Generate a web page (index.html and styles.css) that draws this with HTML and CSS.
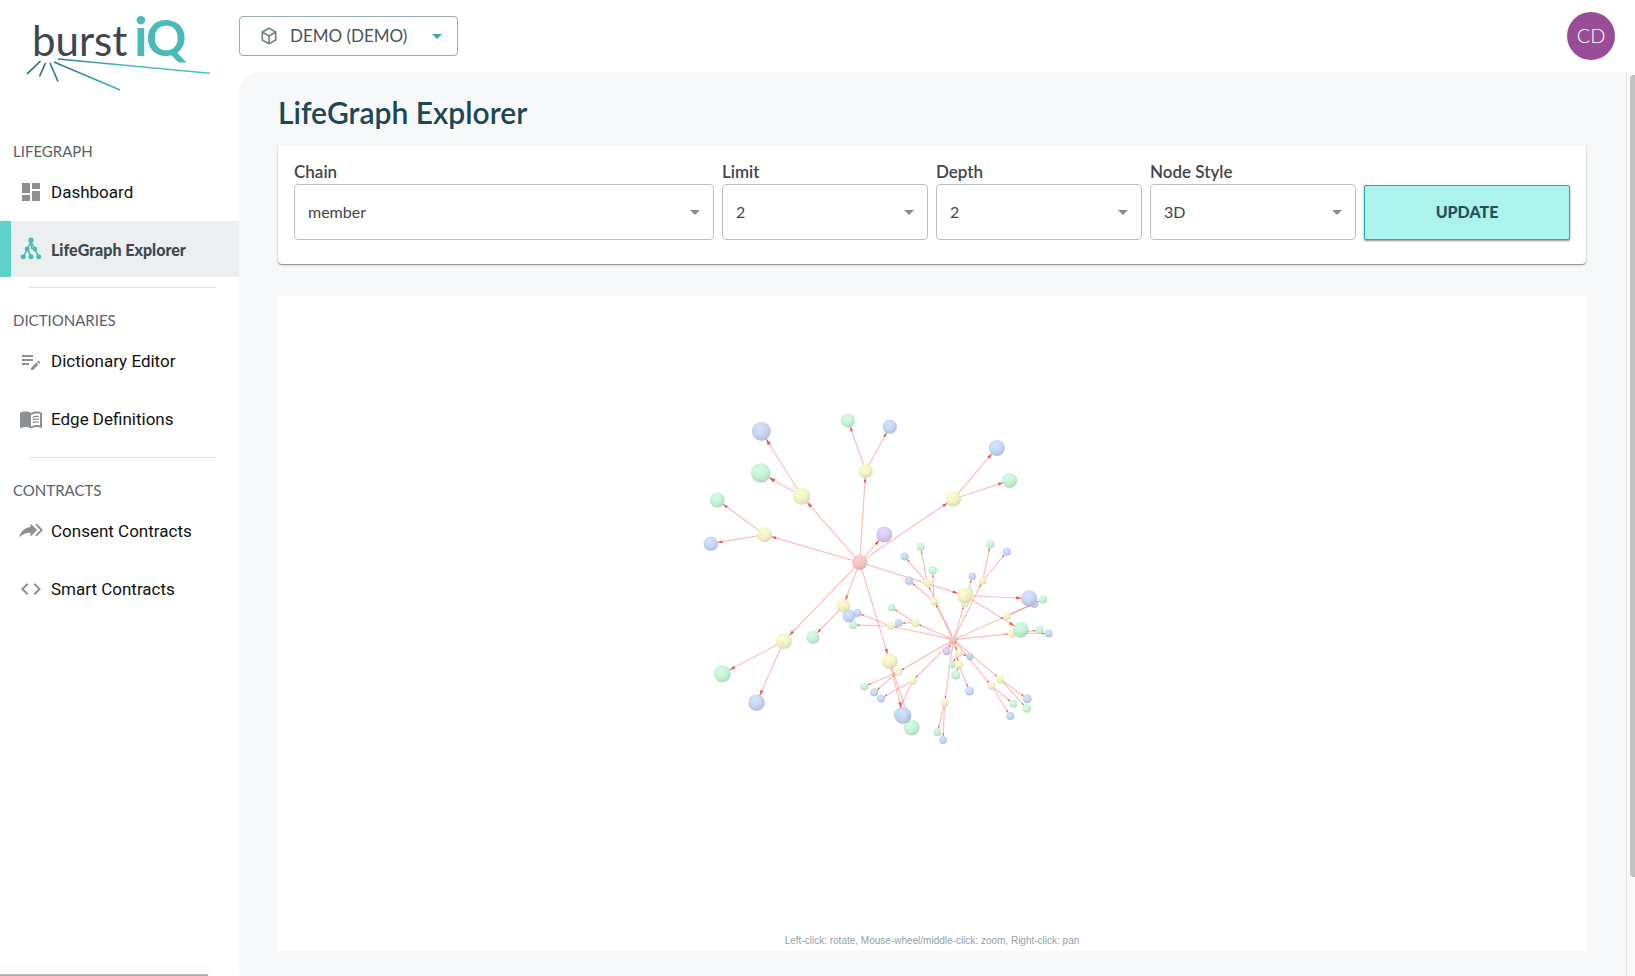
FILE: index.html
```html
<!DOCTYPE html>
<html lang="en">
<head>
<meta charset="utf-8">
<meta name="viewport" content="width=device-width, initial-scale=1">
<title>LifeGraph Explorer</title>
<link rel="stylesheet" href="styles.css">
</head>
<body>
<div class="shell">
  <aside class="sidebar">
    <a class="logo" href="#" aria-label="burst iQ">
      <svg class="logo-art" viewBox="0 0 239 119" role="img" aria-label="burst iQ">
        <defs>
          <linearGradient id="ray" gradientUnits="userSpaceOnUse" x1="27" y1="0" x2="130" y2="0">
            <stop offset="0" stop-color="#1f5f70"/>
            <stop offset="1" stop-color="#4bbfc3"/>
          </linearGradient>
        </defs>
        <text class="logo-burst" x="32" y="56">burst</text>
        <text class="logo-iq" x="134" y="56">i</text>
        <text class="logo-q" x="146" y="56">Q</text>
        <g stroke="url(#ray)" stroke-width="1.6" fill="none">
          <path d="M58 59 210 73.200"/>
          <path d="M54 62 120 90"/>
          <path d="M50 63 58 81.500"/>
          <path d="M45.500 63 39.500 76.500"/>
          <path d="M40.500 61 27 74"/>
        </g>
      </svg>
    </a>
    <nav class="nav" aria-label="Main">
      <section class="nav-group">
        <h2 class="nav-heading">LIFEGRAPH</h2>
        <a class="nav-item" href="#"><svg class="icon" viewBox="0 0 24 24"><path d="M3 13h8V3H3v10zm0 8h8v-6H3v6zm10 0h8V11h-8v10zm0-18v6h8V3h-8z"/></svg>Dashboard</a>
        <a class="nav-item nav-item-active" href="#" aria-current="page"><svg class="icon" viewBox="0 0 24 24"><g fill="none" stroke="currentColor" stroke-width="1.500"><path d="M12 4.500 8.200 12 4.300 20M12 4.500l3.700 7.500 4 8M8.500 12l3.500 8M11.500 4.500 12.500 11l3 1"/></g><circle cx="12" cy="3.200" r="2.600"/><circle cx="8.200" cy="12" r="2.400"/><circle cx="15.800" cy="12" r="2.400"/><circle cx="4.300" cy="19.800" r="2.500"/><circle cx="12" cy="19.800" r="2.500"/><circle cx="19.700" cy="19.800" r="2.500"/></svg>LifeGraph Explorer</a>
      </section>
      <section class="nav-group">
        <h2 class="nav-heading">DICTIONARIES</h2>
        <a class="nav-item" href="#"><svg class="icon" viewBox="0 0 24 24"><path d="M3 10h11v2H3v-2zm0-2h11V6H3v2zm0 8h7v-2H3v2zm15.010-3.130.710-.710c.390-.390 1.020-.390 1.410 0l.710.710c.390.390.390 1.020 0 1.410l-.710.710-2.120-2.120zm-.710.710-5.300 5.300V21h2.120l5.300-5.300-2.120-2.120z"/></svg>Dictionary Editor</a>
        <a class="nav-item" href="#"><svg class="icon" viewBox="0 0 24 24"><path d="M17.500 4.500c-1.950 0-4.050.4-5.500 1.500-1.450-1.100-3.550-1.500-5.500-1.500S2.450 4.900 1 6v14.650c0 .65.73.45.75.45C3.100 20.450 5.050 20 6.500 20c1.950 0 4.050.4 5.500 1.500 1.350-.85 3.800-1.500 5.500-1.500 1.650 0 3.350.3 4.750 1.050.41.21.75-.19.75-.45V6c-1.490-1.120-3.630-1.500-5.500-1.500zm3.500 14c-1.100-.35-2.300-.5-3.500-.5-1.700 0-4.150.65-5.500 1.500V8c1.350-.85 3.800-1.500 5.500-1.500 1.200 0 2.400.15 3.500.5v11.500z"/><path d="M13.700 10.300c2-.9 4-1 6-.6M13.700 13c2-.9 4-1 6-.6M13.700 15.700c2-.9 4-1 6-.6" fill="none" stroke="currentColor" stroke-width="1.300"/></svg>Edge Definitions</a>
      </section>
      <section class="nav-group">
        <h2 class="nav-heading">CONTRACTS</h2>
        <a class="nav-item" href="#"><svg class="icon" viewBox="0 0 24 24"><path d="M11.500 8V4.500L18.200 11l-6.700 6.500v-3.700c-5 0-8.600 1.500-11.300 5C1.200 13.500 4.500 8.900 11.500 8z"/><path d="M17 5.200 22.700 11 17 16.800" fill="none" stroke="currentColor" stroke-width="1.800"/></svg>Consent Contracts</a>
        <a class="nav-item" href="#"><svg class="icon" viewBox="0 0 24 24"><path d="M9.400 16.600 4.800 12l4.600-4.600L8 6l-6 6 6 6 1.400-1.400zm5.200 0 4.600-4.600-4.600-4.600L16 6l6 6-6 6-1.400-1.400z"/></svg>Smart Contracts</a>
      </section>
    </nav>
  </aside>

  <div class="page">
    <header class="topbar">
      <div class="tenant">
        <svg class="tenant-icon" viewBox="0 0 16 18" aria-hidden="true"><path d="M8 1.300 14.700 5v8L8 16.700 1.300 13V5zM1.300 5 8 8.900 14.700 5M8 8.900v7.800"/></svg>
        <select class="tenant-select" aria-label="Customer"><option>DEMO (DEMO)</option></select>
        <svg class="caret caret-teal" viewBox="0 0 10 5" aria-hidden="true"><path d="M0 0h10L5 5z"/></svg>
      </div>
      <button class="avatar" type="button" aria-label="Account">CD</button>
    </header>

    <div class="body">
      <main class="content">
        <h1 class="title">LifeGraph Explorer</h1>
        <form class="filters">
          <div class="field field-wide">
            <label class="field-label" for="chain">Chain</label>
            <div class="control"><select class="select" id="chain"><option>member</option></select><svg class="caret" viewBox="0 0 10 5" aria-hidden="true"><path d="M0 0h10L5 5z"/></svg></div>
          </div>
          <div class="field">
            <label class="field-label" for="limit">Limit</label>
            <div class="control"><select class="select" id="limit"><option>2</option></select><svg class="caret" viewBox="0 0 10 5" aria-hidden="true"><path d="M0 0h10L5 5z"/></svg></div>
          </div>
          <div class="field">
            <label class="field-label" for="depth">Depth</label>
            <div class="control"><select class="select" id="depth"><option>2</option></select><svg class="caret" viewBox="0 0 10 5" aria-hidden="true"><path d="M0 0h10L5 5z"/></svg></div>
          </div>
          <div class="field">
            <label class="field-label" for="style">Node Style</label>
            <div class="control"><select class="select" id="style"><option>3D</option></select><svg class="caret" viewBox="0 0 10 5" aria-hidden="true"><path d="M0 0h10L5 5z"/></svg></div>
          </div>
          <button class="update" type="button">UPDATE</button>
        </form>
        <div class="canvas">
          <svg class="graph" id="graph" viewBox="278 296 1308 655" role="img" aria-label="Graph of member nodes"></svg>
          <p class="hint">Left-click: rotate, Mouse-wheel/middle-click: zoom, Right-click: pan</p>
        </div>
      </main>
      <div class="scrollbar" aria-hidden="true"><div class="scrollbar-thumb"></div></div>
    </div>
  </div>
</div>
<div class="status-strip" aria-hidden="true"></div>
<script src="graph.js"></script>
</body>
</html>
```
FILE: styles.css
```css
* {
  box-sizing: border-box;
}

body {
  margin: 0;
  background: #fff;
  color: #3f4650;
  font-family: Lato, "Noto Sans", sans-serif;
  font-size: 16px;
}

.shell {
  display: flex;
  height: 100vh;
  overflow: hidden;
}

/* Sidebar */
.sidebar {
  flex: 0 0 239px;
}

.logo,
.logo-art {
  display: block;
}

.logo-burst {
  font: 400 42px Lato, sans-serif;
  fill: #3f4650;
}

.logo-iq,
.logo-q {
  font: 700 54px Lato, sans-serif;
  fill: #49bab8;
}

.logo-q {
  font-size: 50px;
}

.nav-group + .nav-group::before {
  content: "";
  display: block;
  height: 1px;
  margin: 10px 23px 0 29px;
  background: #dcdfe0;
}

.nav-heading {
  margin: 0;
  padding: 22px 13px 3px;
  color: #59616a;
  font-size: 15px;
  font-weight: 400;
  line-height: 20px;
}

.nav-item {
  display: flex;
  align-items: center;
  gap: 8px;
  height: 56px;
  padding-left: 19px;
  color: #111;
  font-family: Roboto, sans-serif;
  font-size: 17px;
  text-decoration: none;
}

.nav-item + .nav-item {
  margin-top: 2px;
}

.nav-item + .nav-item-active {
  margin-top: 1px;
  padding-left: 8px;
  border-left: 11px solid #5ed1cb;
  background: #ebeff0;
  color: #3f4650;
  font-family: Lato, sans-serif;
  font-size: 16px;
  font-weight: 900;
}

.icon {
  width: 24px;
  height: 24px;
  fill: currentColor;
  color: #8a9094;
}

.nav-item-active .icon {
  color: #49bab8;
}

/* Top bar */
.page {
  display: flex;
  flex: 1;
  flex-direction: column;
  min-width: 0;
}

.topbar {
  display: flex;
  flex: 0 0 72px;
  align-items: center;
  justify-content: space-between;
  padding-right: 20px;
}

.tenant {
  position: relative;
  width: 219px;
}

.tenant-select {
  width: 100%;
  height: 40px;
  padding: 0 40px 2px 50px;
  border: 1px solid #9aa9b0;
  border-radius: 4px;
  appearance: none;
  background: #fff;
  color: #4b535c;
  font: inherit;
  font-size: 17px;
}

.tenant-icon {
  position: absolute;
  top: 11px;
  left: 22px;
  width: 16px;
  height: 18px;
  fill: none;
  stroke: #7b8388;
  stroke-width: 1.7;
  pointer-events: none;
}

.avatar {
  width: 48px;
  height: 48px;
  padding: 0 0 2px;
  border: 0;
  border-radius: 50%;
  background: #984d96;
  color: #fff;
  font: 300 20px Lato, sans-serif;
}

/* Content */
.body {
  display: flex;
  flex: 1;
  min-height: 0;
}

.content {
  flex: 1;
  min-width: 0;
  margin-bottom: -12px;
  padding: 20px 40px 40px 39px;
  border-radius: 20px 0 0 20px;
  background: #f6f8fa;
}

.title {
  margin: 0 0 13px;
  color: #1c4855;
  font-size: 30px;
  font-weight: 600;
  line-height: 40px;
}

.filters {
  display: grid;
  grid-template-columns: repeat(12, minmax(0, 1fr));
  gap: 8px;
  align-items: end;
  padding: 16px 16px 24px;
  border-radius: 4px;
  background: #fff;
  box-shadow: 0 1px 1px #8d9499, 0 1px 3px rgba(0, 0, 0, 0.16);
}

.field {
  grid-column: span 2;
}

.field-wide {
  grid-column: span 4;
}

.field-label {
  display: block;
  padding-bottom: 2px;
  font-size: 17px;
  font-weight: 600;
  line-height: 21px;
}

.control {
  position: relative;
}

.select {
  display: block;
  width: 100%;
  height: 56px;
  padding: 0 32px 2px 13px;
  border: 1px solid #bdc0c2;
  border-radius: 4px;
  appearance: none;
  background: #fff;
  color: #3f4650;
  font: inherit;
}

.caret {
  position: absolute;
  top: 50%;
  right: 14px;
  width: 10px;
  height: 5px;
  margin-top: -2px;
  fill: #878d92;
  pointer-events: none;
}

.caret-teal {
  right: 16px;
  fill: #3aaea9;
}

.update {
  grid-column: span 2;
  height: 55px;
  padding: 0 0 2px;
  border: 1px solid #2fa8a6;
  border-radius: 2px;
  background: #abf3ec;
  box-shadow: 0 1px 2px rgba(0, 0, 0, 0.45);
  color: #23505f;
  font: 900 16px Lato, sans-serif;
}

.canvas {
  position: relative;
  margin-top: 32px;
  background: #fff;
}

.graph {
  display: block;
  width: 100%;
}

.edge {
  stroke: #ff5a5a;
  stroke-opacity: 0.4;
  stroke-width: 1.2;
}

.arrow {
  fill: #f24848;
  fill-opacity: 0.9;
}

.hint {
  position: absolute;
  inset: auto 0 4px;
  margin: 0;
  color: #93a0aa;
  font: 10px/12px "Liberation Sans", Arial, sans-serif;
  text-align: center;
}

.scrollbar {
  flex: 0 0 9px;
  overflow: hidden;
  padding: 3px 0 0 3px;
  border-left: 1px solid #e4e5e7;
  background: #fafafa;
}

.scrollbar-thumb {
  width: 8px;
  height: 89%;
  border-radius: 4px;
  background: #c1c1c1;
}

.status-strip {
  position: fixed;
  bottom: 0;
  left: 0;
  width: 208px;
  height: 2px;
  border-top: 1px solid #b9bcbf;
  background: #f79a45;
  box-shadow: 0 -2px 10px rgba(0, 0, 0, 0.14);
}
```
FILE: graph.js
```js
// Nodes: id -> [x, y, radius, colour]
const nodes = {
  R1: [859.7, 562.3, 7.6, "pink"], P1: [884.3, 534.5, 8, "purple"],
  Y1: [801.7, 496, 8.8, "yellow"], B1: [761.3, 431.3, 9.5, "blue"], G1: [760.7, 473, 9.8, "green"],
  Y2: [764.5, 534.7, 7.5, "yellow"], G2: [717.3, 500, 7.5, "green"], B2: [710.8, 543.7, 7.3, "blue"],
  Y3: [865.7, 471, 7.2, "yellow"], G3: [848, 420.5, 7.1, "green"], B3: [889.8, 426.7, 7.1, "blue"],
  Y4: [953.4, 499, 7.7, "yellow"], B4: [996.8, 448, 8, "blue"], G4: [1009.7, 480.5, 7.5, "green"],
  Y5: [843.3, 606, 6.8, "yellow"], B5: [849, 616, 6.5, "blue"], G5: [813, 637.3, 6.6, "green"],
  Y6: [784, 641, 8.1, "yellow"], G6: [722.4, 673.7, 8.6, "green"], B6: [756.5, 702.7, 8.3, "blue"],
  Y7: [965, 595.5, 8, "yellow"], B7: [1029.2, 598.5, 8.2, "blue"], G7: [1020.8, 629.8, 8, "green"],
  Y8: [889.8, 661.3, 8, "yellow"], B8: [903, 715.5, 8.5, "blue"], G8: [911.7, 727.5, 8, "green"],
  R2: [953.5, 639.7, 4, "pink"], p: [946.7, 651.2, 4, "purple"],
  a: [927.3, 583.3, 4, "yellow"], a1: [904.7, 556.5, 4, "blue"], a2: [920.6, 546.7, 4, "green"],
  b: [934, 601.2, 4.2, "yellow"], b1: [932.6, 570.3, 4.3, "green"], b2: [909, 580.6, 4.3, "blue"],
  c: [915.4, 623, 4, "yellow"], c1: [891.5, 607.5, 3.8, "green"], c2: [898.7, 623, 3.8, "blue"],
  d: [890.4, 626, 4, "yellow"], d1: [857.4, 613, 4, "blue"], d2: [853, 625, 4, "green"],
  e: [964.7, 603, 4, "yellow"], e1: [972.3, 576.3, 3.8, "blue"], e2: [969, 591, 3.6, "green"],
  f: [982.7, 580.7, 4.1, "yellow"], f1: [990.4, 544.1, 4.2, "green"], f2: [1006.9, 551.7, 4.1, "blue"],
  g: [1007, 615.7, 4.2, "yellow"], g1: [1034.3, 603.8, 4.2, "blue"], g2: [1043, 599.4, 4.2, "green"],
  h: [1012.3, 633.5, 4.2, "yellow"], h1: [1039.7, 630, 4, "green"], h2: [1048.6, 633.5, 4, "blue"],
  i: [898.1, 672, 4.1, "yellow"], i1: [864.4, 686.4, 4, "green"], i2: [874.2, 692.2, 4, "blue"],
  j: [912.5, 680.8, 4.3, "yellow"], j1: [881, 698.4, 4.2, "blue"], j2: [897.6, 713.6, 4.3, "green"],
  k: [958.3, 653.4, 3.6, "yellow"], k1: [969.7, 656.4, 3.6, "blue"], k2: [951.7, 664.7, 3.5, "green"],
  l: [958.8, 664.8, 4.3, "yellow"], l1: [955.7, 675, 4.6, "green"], l2: [969.5, 691, 4.5, "blue"],
  m: [944.7, 702.8, 4.1, "yellow"], m1: [937.4, 732.2, 3.9, "green"], m2: [943, 740, 4, "blue"],
  n: [991.6, 686, 4, "yellow"], n1: [1013.4, 703.8, 4, "green"], n2: [1010.3, 716, 4, "blue"],
  o: [1000.4, 679.4, 4.4, "yellow"], o1: [1027.3, 698.8, 4.5, "blue"], o2: [1026.8, 708.4, 4.3, "green"]
};

const edges = {
  R1: "P1 Y1 Y2 Y3 Y4 Y5 Y6 Y7 Y8",
  Y1: "B1 G1", Y2: "G2 B2", Y3: "G3 B3", Y4: "B4 G4",
  Y5: "B5 G5", Y6: "G6 B6", Y7: "B7 G7", Y8: "B8 G8",
  R2: "p a b c d e f g h i j k l m n o",
  a: "a1 a2", b: "b1 b2", c: "c1 c2", d: "d1 d2", e: "e1 e2", f: "f1 f2",
  g: "g1 g2", h: "h1 h2", i: "i1 i2", j: "j1 j2", k: "k1 k2", l: "l1 l2",
  m: "m1 m2", n: "n1 n2", o: "o1 o2"
};

// Light centre, body, shaded rim
const shades = {
  blue: ["#cfdffc", "#c0d1f2", "#a3b3d2"],
  green: ["#cdfce0", "#bff2d2", "#a2d2b4"],
  yellow: ["#fcfcd0", "#f3f3c2", "#d2d2a6"],
  pink: ["#fbd0cb", "#f2c2bd", "#d2a5a1"],
  purple: ["#dfd2fc", "#d3c5f2", "#b4a7d3"]
};

const defs = Object.entries(shades).map(([name, [light, body, rim]]) =>
  `<radialGradient id="${name}" cx="0.4" cy="0.3" r="0.75">
    <stop offset="0" stop-color="${light}"/><stop offset="0.5" stop-color="${body}"/><stop offset="1" stop-color="${rim}"/>
  </radialGradient>`).join("");

let lines = "";
let arrows = "";
for (const [from, targets] of Object.entries(edges)) {
  for (const to of targets.split(" ")) {
    const [x1, y1] = nodes[from];
    const [x2, y2, r] = nodes[to];
    const length = Math.hypot(x2 - x1, y2 - y1);
    const ux = (x2 - x1) / length;
    const uy = (y2 - y1) / length;
    const size = r > 5 ? r * 0.7 : 3;
    const half = r > 5 ? r * 0.2 : 0.9;
    const tipX = x2 - ux * r * 0.9;
    const tipY = y2 - uy * r * 0.9;
    const baseX = tipX - ux * size;
    const baseY = tipY - uy * size;
    lines += `<line class="edge" x1="${x1}" y1="${y1}" x2="${tipX}" y2="${tipY}"/>`;
    arrows += `<polygon class="arrow" points="${tipX},${tipY} ${baseX - uy * half},${baseY + ux * half} ${baseX + uy * half},${baseY - ux * half}"/>`;
  }
}

// Small nodes lie further away, so they are drawn first
const circles = Object.values(nodes)
  .sort((p, q) => p[2] - q[2])
  .map(([x, y, r, colour]) => `<circle cx="${x}" cy="${y}" r="${r}" fill="url(#${colour})" fill-opacity="0.88"/>`)
  .join("");

document.getElementById("graph").innerHTML = `<defs>${defs}</defs>${lines}${arrows}${circles}`;
```
